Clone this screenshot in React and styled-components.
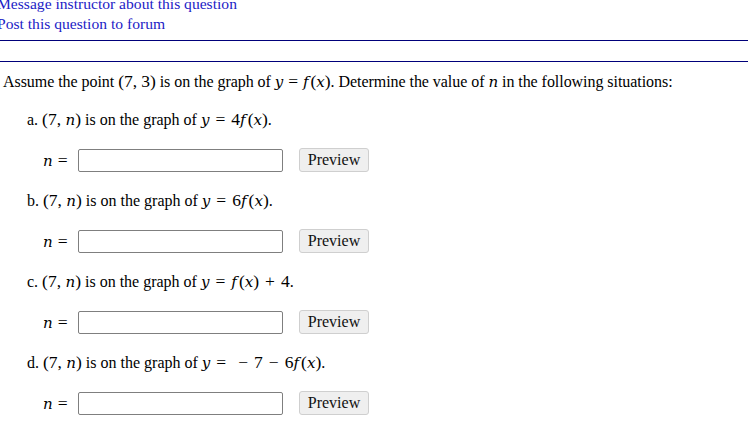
import React from "react";
import styled, { createGlobalStyle } from "styled-components";

const Global = createGlobalStyle`
  html, body { margin: 0; padding: 0; background: #fff; }
  body { font-family: "Liberation Serif", "Times New Roman", serif; font-size: 16px; color: #000; overflow: hidden; }
`;

const Page = styled.div`
  margin-top: -6px;
  width: 748px;
`;

const LinkList = styled.div`
  display: flex;
  flex-direction: column;
  margin-left: -3px;
`;

const Link = styled.a`
  color: #1c1cc6;
  text-decoration: none;
  line-height: 20px;
  font-size: 15.6px;
`;

const Rule = styled.hr`
  border: 0;
  border-top: 1px solid #00007a;
  margin: 0;
  height: 0;
`;

const Spacer = styled.div`
  height: ${(p) => p.$h}px;
`;

const Intro = styled.p`
  margin: 0;
  padding-left: 3px;
  line-height: 20px;
  height: 20px;
  white-space: nowrap;
  letter-spacing: -0.05px;
`;

const Items = styled.ol`
  list-style: none;
  margin: 0;
  padding: 0 0 0 27px;
`;

const Item = styled.li`
  display: flex;
  flex-direction: column;
`;

const Statement = styled.div`
  line-height: 20px;
  height: 20px;
  white-space: nowrap;
`;

const AnswerRow = styled.div`
  display: flex;
  align-items: center;
  padding-left: 16px;
  height: 24px;
`;

const Label = styled.span`
  width: 35px;
  display: inline-block;
`;

const Input = styled.input`
  box-sizing: border-box;
  width: 205px;
  height: 23px;
  border: 1px solid #7f7f7f;
  border-radius: 2px;
  margin: 0;
  padding: 0 3px;
`;

const Button = styled.button`
  margin-left: 16px;
  box-sizing: border-box;
  width: 70px;
  height: 24px;
  background: #efefef;
  border: 1px solid #cfcfcf;
  border-radius: 3px;
  font-family: "Liberation Serif", "Times New Roman", serif;
  font-size: 16px;
  color: #111;
  padding: 0;
`;

const M = styled.span`
  font-family: "Liberation Serif", "Times New Roman", serif;
  font-size: 17.5px;
  white-space: nowrap;
`;

const V = styled.span`
  font-family: "DejaVu Serif", serif;
  font-style: italic;
  font-size: 0.86em;
  margin-right: ${(p) => p.$r ?? 0}px;
`;

const Op = styled.span`
  margin: 0 ${(p) => p.$m ?? 6}px;
`;

const fx = (
  <>
    <V $r={2}>f</V>
    (<V>x</V>)
  </>
);

const pt = (
  <M>
    (7, <V>n</V>)
  </M>
);

const items = [
  { l: "a.", rhs: <>4{fx}</> },
  { l: "b.", rhs: <>6{fx}</> },
  { l: "c.", rhs: <>{fx}<Op>+</Op>4</> },
  { l: "d.", rhs: <><Op $m={6}>−</Op>7<Op>−</Op>6{fx}</> },
];

export default function App() {
  return (
    <>
      <Global />
      <Page>
        <LinkList>
          <Link href="#">Message instructor about this question</Link>
          <Link href="#">Post this question to forum</Link>
        </LinkList>
        <Spacer $h={6} />
        <Rule />
        <Spacer $h={20} />
        <Rule />
        <Spacer $h={9} />
        <Intro>
          Assume the point <M>(7, 3)</M> is on the graph of{" "}
          <M>
            <V>y</V>
            <Op $m={5}>=</Op>
            {fx}
          </M>
          . Determine the value of <M><V>n</V></M> in the following situations:
        </Intro>
        <Spacer $h={18} />
        <Items>
          {items.map((it, i) => (
            <Item key={i}>
              <Statement>
                {it.l} {pt} is on the graph of{" "}
                <M>
                  <V>y</V>
                  <Op>=</Op>
                  {it.rhs}
                </M>
                .
              </Statement>
              <Spacer $h={19} />
              <AnswerRow>
                <Label>
                  <M>
                    <V>n</V>
                    <Op $m={5}>=</Op>
                  </M>
                </Label>
                <Input type="text" />
                <Button type="button">Preview</Button>
              </AnswerRow>
              <Spacer $h={18} />
            </Item>
          ))}
        </Items>
      </Page>
    </>
  );
}
